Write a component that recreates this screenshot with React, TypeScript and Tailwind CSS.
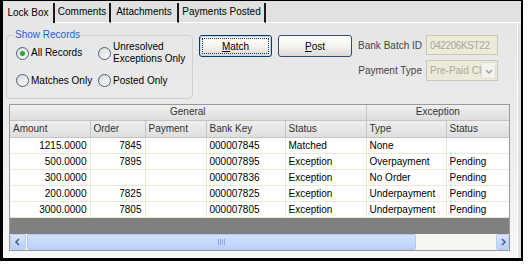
import React from "react";

const rows = [
  ["1215.0000", "7845", "", "000007845", "Matched", "None", ""],
  ["500.0000", "7895", "", "000007895", "Exception", "Overpayment", "Pending"],
  ["300.0000", "", "", "000007836", "Exception", "No Order", "Pending"],
  ["200.0000", "7825", "", "000007825", "Exception", "Underpayment", "Pending"],
  ["3000.0000", "7805", "", "000007805", "Exception", "Underpayment", "Pending"],
];

const cols = [
  { name: "Amount", w: 80, right: true },
  { name: "Order", w: 55, right: true },
  { name: "Payment", w: 61 },
  { name: "Bank Key", w: 79 },
  { name: "Status", w: 81 },
  { name: "Type", w: 80 },
  { name: "Status", w: 63 },
];

function Radio({ checked }: { checked?: boolean }) {
  return (
    <span className="w-[13px] h-[13px] rounded-full border border-[#4a5d80] bg-linear-to-br from-[#d8d8d2] to-white flex items-center justify-center shrink-0">
      {checked && <span className="w-[5px] h-[5px] rounded-full bg-[#2ea62e]" />}
    </span>
  );
}

function RadioItem({ label, checked }: { label: React.ReactNode; checked?: boolean }) {
  return (
    <label className="flex items-center gap-[2px]">
      <Radio checked={checked} />
      <span className="leading-[12px]">{label}</span>
    </label>
  );
}

function Tab({ label, active, w }: { label: string; active?: boolean; w: string }) {
  return (
    <div
      className={`${w} mt-[2px] flex items-center justify-center pb-[2px] border-r-2 border-r-[#1a1a1a] ${
        active ? "bg-[#e6e6e6]" : "bg-[#e1e1e1] border-b border-b-white"
      }`}
    >
      {label}
    </div>
  );
}

function Chevron({ dir }: { dir: "left" | "right" | "down" }) {
  const d =
    dir === "left" ? "M6 2 L3 5 L6 8" : dir === "right" ? "M4 2 L7 5 L4 8" : "M2 4 L5 7 L8 4";
  return (
    <svg width="10" height="10" viewBox="0 0 10 10">
      <path d={d} fill="none" stroke={dir === "down" ? "#a7a7a7" : "#4d6185"} strokeWidth="1.6" />
    </svg>
  );
}

export default function App() {
  return (
    <div className="w-[528px] h-[272px] bg-white font-['Liberation_Sans',Arial,sans-serif] text-[10px] text-black">
      <div className="w-[523px] h-[261px] border-l-[3px] border-t border-r-2 border-b-[3px] border-black bg-[#e1e1e1] flex flex-col">
        {/* Tabs */}
        <div className="h-[22px] flex shrink-0">
          <Tab label="Lock Box" active w="w-[52px]" />
          <Tab label="Comments" w="w-[56px]" />
          <Tab label="Attachments" w="w-[68px]" />
          <Tab label="Payments Posted" w="w-[87px]" />
          <div className="flex-1 border-b border-b-white" />
        </div>

        {/* Panel */}
        <div className="flex-1 mr-[3px] border-r border-r-white bg-linear-to-b from-[#e6e6e6] via-[#ececec] to-[#f7f7f7] pt-[12px] pl-[3px]">
          <div className="flex items-start h-[64px]">
            {/* Show Records */}
            <div className="relative w-[187px] h-[64px] border border-[#cfcfc3] rounded-[4px] pt-[5px] pl-[9px]">
              <span className="absolute left-[7px] top-[-7px] px-px text-[#1f5fd6] leading-[12px] bg-[#e6e6e6]">
                Show Records
              </span>
              <div className="grid grid-cols-[82px_1fr] gap-y-[9px]">
                <div className="h-[24px] flex items-center">
                  <RadioItem label="All Records" checked />
                </div>
                <div className="h-[24px] flex items-center">
                  <RadioItem
                    label={
                      <>
                        Unresolved
                        <br />
                        Exceptions Only
                      </>
                    }
                  />
                </div>
                <RadioItem label="Matches Only" />
                <RadioItem label="Posted Only" />
              </div>
            </div>

            {/* Buttons */}
            <button className="ml-[6px] w-[73px] h-[22px] rounded-[3px] border border-[#003c74] bg-linear-to-b from-white via-[#f3f3f1] to-[#dcdad2] p-[2px] shadow-[inset_0_0_0_1px_#c4d7f2]">
              <span className="flex h-full items-center justify-center border border-dotted border-[#333]">
                <span className="underline underline-offset-1">M</span>atch
              </span>
            </button>
            <button className="ml-[6px] w-[74px] h-[22px] rounded-[3px] border border-[#2a4f7e] bg-linear-to-b from-white via-[#f3f3f1] to-[#dcdad2] flex items-center justify-center">
              <span className="underline underline-offset-1">P</span>ost
            </button>

            {/* Fields */}
            <div className="ml-[4px] grid grid-cols-[66px_72px] gap-x-[4px] gap-y-[5px] items-center">
              <span className="text-right whitespace-nowrap text-[#444]">Bank Batch ID</span>
              <div className="h-[20px] border border-[#cbc7b8] bg-[#ecead9] flex items-center px-[3px] text-[#aca899] tracking-[-0.4px] whitespace-nowrap overflow-hidden">
                042206KST22
              </div>
              <span className="text-right whitespace-nowrap text-[#444]">Payment Type</span>
              <div className="h-[21px] border border-[#cbc7b8] bg-[#ecead9] flex items-center pl-[3px] text-[#aca899] overflow-hidden">
                <span className="flex-1 whitespace-nowrap overflow-hidden">Pre-Paid Ch</span>
                <span className="w-[15px] h-[17px] mr-px bg-[#f4f3ee] border border-[#e2e0d6] flex items-center justify-center shrink-0">
                  <Chevron dir="down" />
                </span>
              </div>
            </div>
          </div>

          {/* Grid */}
          <div className="mt-[5px] ml-[3px] w-[501px] border border-[#9a9a9a] bg-white">
            <table className="table-fixed border-collapse w-[499px]">
              <colgroup>
                {cols.map((c, i) => (
                  <col key={i} style={{ width: c.w }} />
                ))}
              </colgroup>
              <thead>
                <tr className="h-[15px] bg-linear-to-b from-[#f0f0f0] to-[#dedede] text-[#333]">
                  <th colSpan={5} className="font-normal text-center border-r border-b border-[#c4c4c4] p-0 leading-[14px]">
                    General
                  </th>
                  <th colSpan={2} className="font-normal text-center border-b border-[#c4c4c4] p-0 leading-[14px]">
                    Exception
                  </th>
                </tr>
                <tr className="h-[17px] bg-linear-to-b from-[#f0f0f0] to-[#dedede] text-[#333]">
                  {cols.map((c, i) => (
                    <th
                      key={i}
                      className={`font-normal text-left px-[3px] py-0 border-b border-[#c4c4c4] ${
                        i < cols.length - 1 ? "border-r" : ""
                      }`}
                    >
                      {c.name}
                    </th>
                  ))}
                </tr>
              </thead>
              <tbody>
                {rows.map((r, ri) => (
                  <tr key={ri} className="h-[16px]">
                    {r.map((v, ci) => (
                      <td
                        key={ci}
                        className={`py-0 px-[3px] leading-[15px] border-b border-[#ebe7d4] whitespace-nowrap overflow-hidden ${
                          ci < r.length - 1 ? "border-r" : ""
                        } ${cols[ci].right ? "text-right" : "text-left"}`}
                      >
                        {v}
                      </td>
                    ))}
                  </tr>
                ))}
              </tbody>
            </table>
            <div className="h-[16px] bg-[#808080]" />
            {/* Scrollbar */}
            <div className="h-[16px] flex bg-[#f6f5f0]">
              <div className="w-[16px] h-[16px] rounded-[2px] border border-[#b9cdf5] bg-linear-to-b from-[#dbe6fd] to-[#b9cdfa] flex items-center justify-center">
                <Chevron dir="left" />
              </div>
              <div className="ml-px w-[389px] h-[16px] rounded-[2px] border border-[#b4c8f4] bg-linear-to-b from-[#d4e1fd] to-[#bcd0fb] flex items-center justify-center gap-[1px]">
                <span className="w-px h-[6px] bg-[#8fa9e6]" />
                <span className="w-px h-[6px] bg-[#8fa9e6]" />
                <span className="w-px h-[6px] bg-[#8fa9e6]" />
                <span className="w-px h-[6px] bg-[#8fa9e6]" />
              </div>
              <div className="flex-1" />
              <div className="w-[13px] h-[16px] rounded-[2px] border border-[#b9cdf5] bg-linear-to-b from-[#dbe6fd] to-[#b9cdfa] flex items-center justify-center">
                <Chevron dir="right" />
              </div>
            </div>
          </div>
        </div>
      </div>
    </div>
  );
}
